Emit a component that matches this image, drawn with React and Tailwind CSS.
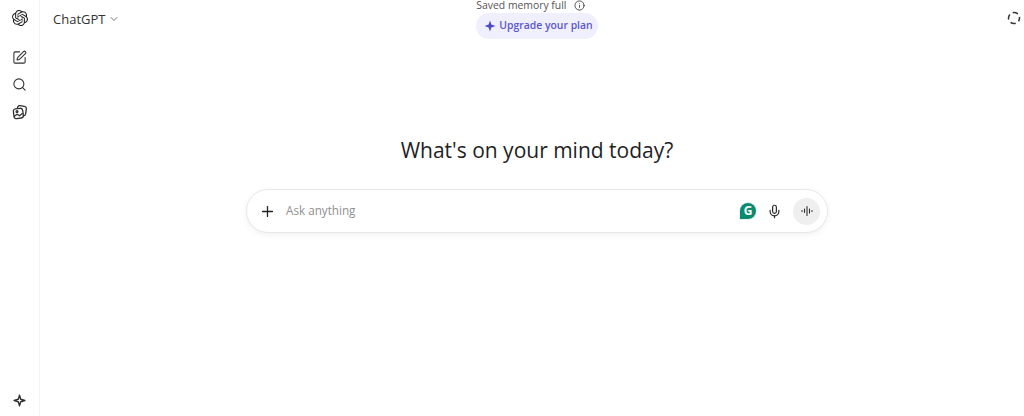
import { ChevronDown, Info, Mic, Plus, Search, SquarePen } from 'lucide-react';
import { SiOpenai } from 'react-icons/si';

const LibraryIcon = () => (
  <svg width="16" height="16" viewBox="0 0 16 16" fill="none" stroke="#2f2f2f" strokeWidth="1.3" strokeLinejoin="round" strokeLinecap="round">
    <rect x="1.6" y="4.6" width="9.4" height="9.8" rx="2.4" transform="rotate(-8 6 9)" />
    <path d="M5.5 3.4 6 2.7c.3-.7 1-1.1 1.8-1l4.6.6c1.2.2 2.1 1.300 1.900 2.500l-.7 5.200c-.1.800-.7 1.500-1.500 1.700" />
    <circle cx="5" cy="7.600" r="0.900" />
    <path d="m2.200 12.200 3-2 2.300 1.600 2.800-2.200" />
  </svg>
);

const SparkleIcon = () => (
  <svg width="13" height="13" viewBox="0 0 14 14" fill="none" stroke="#2f2f2f" strokeWidth="1.5" strokeLinejoin="round">
    <path d="M7 1.200 8.300 5.700 12.800 7 8.300 8.300 7 12.800 5.700 8.300 1.200 7 5.700 5.700Z" />
  </svg>
);

const UpgradeStar = () => (
  <svg width="12" height="12" viewBox="0 0 12 12" fill="#4f4cc9">
    <path d="M6 .5 7.400 4.600 11.500 6 7.400 7.400 6 11.500 4.600 7.400.5 6 4.600 4.600Z" />
  </svg>
);

const DashedRing = () => (
  <svg width="14" height="14" viewBox="0 0 14 14" fill="none" stroke="#333" strokeWidth="1.5">
    <circle cx="7" cy="7" r="5.500" strokeDasharray="5.400 3.240" strokeDashoffset="2" />
  </svg>
);

const GrammarlyBadge = () => (
  <div className="flex h-[16px] w-[16px] items-center justify-center rounded-full rounded-bl-[2px] bg-[#0b8a70] ring-1 ring-[#e3f3ef]">
    <span className="text-[12px] leading-none font-bold text-white">G</span>
  </div>
);

const VoiceBars = () => (
  <svg width="12" height="12" viewBox="0 0 12 12" stroke="#333" strokeWidth="1.100" strokeLinecap="round">
    <path d="M1 5.500v1M3.500 4v3.500M6 1.500v9M8.500 4v4M11 5.500v1" />
  </svg>
);

const Sidebar = () => (
  <aside className="flex h-full w-10 shrink-0 flex-col items-center border-r border-[#f4f4f4] pb-[9px] pt-[10px]">
    <SiOpenai className="h-4 w-4 text-[#222]" />
    <div className="mt-[24px] flex flex-col items-center gap-[12px] text-[#2f2f2f]">
      <SquarePen size={15} strokeWidth={1.7} />
      <Search size={15} strokeWidth={1.7} />
      <LibraryIcon />
    </div>
    <div className="mt-auto">
      <SparkleIcon />
    </div>
  </aside>
);

export default function App() {
  return (
    <div className="flex h-[416px] w-[1024px] overflow-hidden bg-white font-['Open_Sans',sans-serif] text-[#1f1f1f]">
      <Sidebar />
      <main className="relative flex flex-1 flex-col items-center pl-[10px]">
        <button className="absolute left-[13px] top-[9px] flex items-center gap-[3px] text-[13px] leading-5 text-[#333]">
          ChatGPT
          <ChevronDown size={12} className="text-[#777]" />
        </button>
        <span className="absolute right-[3px] top-[11px]">
          <DashedRing />
        </span>

        <div className="flex flex-col items-center">
          <div className="flex h-[13px] w-full items-start gap-[7px] text-[10.400px] leading-[11px] text-[#555]">
            <span>Saved memory full</span>
            <Info size={11} className="text-[#444]" />
          </div>
          <button className="flex h-[26px] items-center gap-[3px] rounded-full bg-[#f0effd] pl-[8px] pr-[5px] text-[10.400px] font-semibold text-[#5b57cf]">
            <UpgradeStar />
            Upgrade your plan
          </button>
        </div>

        <h1 className="mt-[95px] text-[21px] leading-8 text-[#1f1f1f]">What's on your mind today?</h1>

        <div className="mt-[23px] flex h-[44px] w-[582px] items-center rounded-full border border-[#e8e8e8] bg-white pl-[12px] pr-[7px] shadow-[0_2px_6px_rgba(0,0,0,0.06)]">
          <Plus size={17} strokeWidth={1.8} className="text-[#222]" />
          <span className="ml-[10px] text-[11.700px] text-[#8f8f8f]">Ask anything</span>
          <div className="ml-auto flex items-center">
            <GrammarlyBadge />
            <Mic size={15} strokeWidth={1.9} className="ml-[11px] text-[#2a2a2a]" />
            <div className="ml-[11px] flex h-[27px] w-[27px] items-center justify-center rounded-full bg-[#efefef]">
              <VoiceBars />
            </div>
          </div>
        </div>
      </main>
    </div>
  );
}
